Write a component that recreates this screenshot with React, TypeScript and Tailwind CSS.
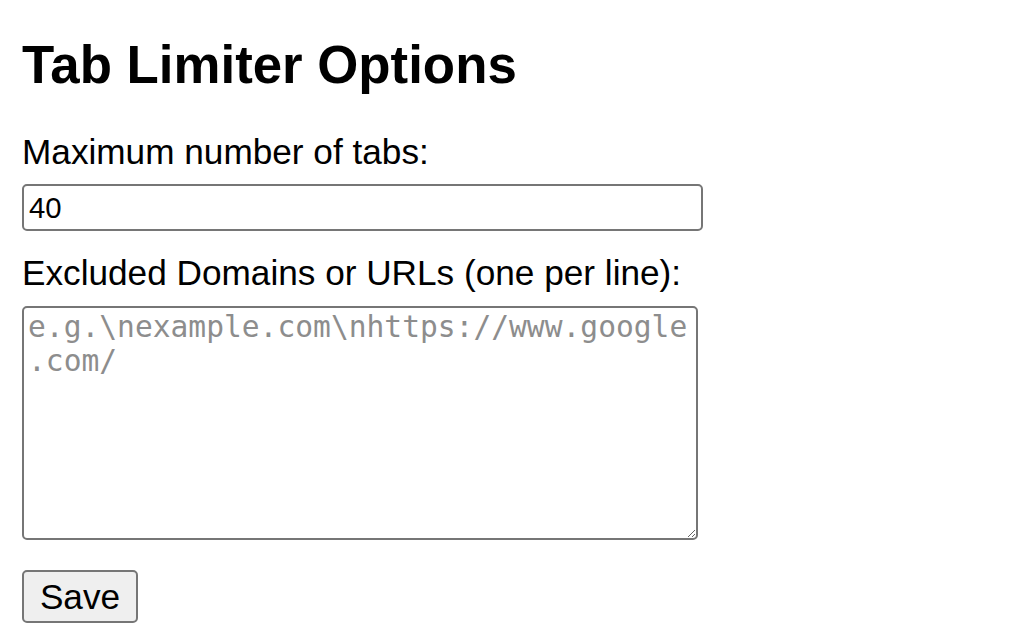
import { useState } from "react";

export default function App() {
  const [maxTabs, setMaxTabs] = useState("40");
  const [excluded, setExcluded] = useState("");

  return (
    <div className="min-h-screen bg-white text-black font-['Liberation_Sans',Arial,sans-serif] pl-[22px] pt-[34px]">
      <h2 className="text-[52.8px] font-bold leading-[normal]">Tab Limiter Options</h2>

      <label htmlFor="maxTabs" className="block mt-[37px] text-[35.2px] leading-[normal]">
        Maximum number of tabs:
      </label>
      <input
        id="maxTabs"
        type="text"
        value={maxTabs}
        onChange={(e) => setMaxTabs(e.target.value)}
        className="mt-[12px] block w-[681px] h-[47px] border-2 border-[#767676] rounded-[5px] px-[5px] text-[29.3px] leading-[normal] outline-none"
      />

      <label htmlFor="excluded" className="block mt-[22px] text-[35.2px] leading-[normal]">
        Excluded Domains or URLs (one per line):
      </label>
      <textarea
        id="excluded"
        value={excluded}
        onChange={(e) => setExcluded(e.target.value)}
        placeholder={"e.g.\\nexample.com\\nhttps://www.google.com/"}
        className="mt-[13px] block w-[676px] h-[234px] border-2 border-[#767676] rounded-[5px] px-[4px] py-[2px] font-['DejaVu_Sans_Mono',monospace] text-[29.6px] leading-[normal] placeholder:text-[#8d8d8d] outline-none resize"
      />

      <button
        type="button"
        className="mt-[30px] block w-[116px] h-[53px] bg-[#efefef] border-2 border-[#767676] rounded-[5px] text-[35.2px] leading-[normal]"
      >
        Save
      </button>
    </div>
  );
}
